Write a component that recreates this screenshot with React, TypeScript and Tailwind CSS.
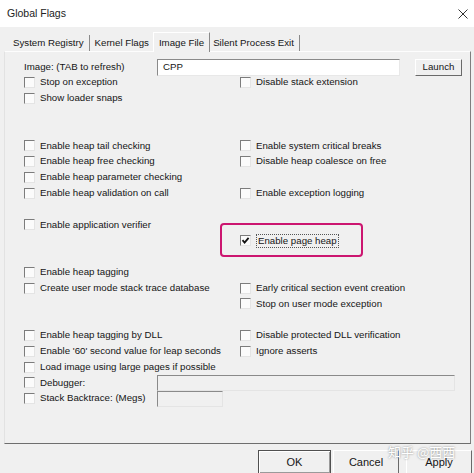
import type { ReactNode } from 'react';

type CheckProps = { label?: string; checked?: boolean; focus?: boolean };

function Box({ checked }: { checked?: boolean }) {
  return (
    <span className="relative h-[11px] w-[11px] shrink-0 border border-t-[#7c7c7c] border-l-[#7c7c7c] border-r-[#e4e4e4] border-b-[#e4e4e4] bg-[#fbfbfb]">
      {checked && (
        <svg viewBox="0 0 9 9" className="absolute inset-0 h-[9px] w-[9px]">
          <path d="M1.5 4.2 L3.6 6.6 L7.6 1.8" fill="none" stroke="#111" strokeWidth="1.8" />
        </svg>
      )}
    </span>
  );
}

function Check({ label, checked, focus }: CheckProps) {
  if (!label) return <div />;
  return (
    <div className="flex items-center gap-[5px]">
      <Box checked={checked} />
      <span className={focus ? 'border border-dotted border-[#555] px-px leading-[12px]' : ''}>{label}</span>
    </div>
  );
}

function Row({ children }: { children: ReactNode }) {
  return <div className="grid h-[15.8px] grid-cols-[216px_1fr] items-center">{children}</div>;
}

function Tab({ label, active }: { label: string; active?: boolean }) {
  return active ? (
    <div className="relative z-10 -mx-[2px] -mb-px flex h-[20px] items-start border-t border-l border-r border-t-white border-l-white border-r-[#8a8a8a] bg-[#f0f0f0] px-[5px] pt-[3px]">
      {label}
    </div>
  ) : (
    <div className="flex h-[16px] items-center border-r border-r-[#8a8a8a] px-[5px] pt-px">{label}</div>
  );
}

function Button({ label, primary, className }: { label: string; primary?: boolean; className: string }) {
  return (
    <div
      className={
        'flex h-[24px] items-center justify-center border bg-[#f0f0f0] text-[11px] ' +
        (primary
          ? 'border-[#505050] shadow-[inset_1px_1px_0_#fff,inset_-1px_-1px_0_#9a9a9a] '
          : 'border-t-white border-l-white border-r-[#6a6a6a] border-b-[#6a6a6a] ') +
        className
      }
    >
      {label}
    </div>
  );
}

export default function App() {
  return (
    <div className="relative h-[473px] w-[474px] overflow-hidden bg-[#f0f0f0] font-['Liberation_Sans',Arial,sans-serif] text-[9.7px] text-[#151515]">
      <div className="flex h-[27px] items-center justify-between bg-white pl-[7px] pr-[6px]">
        <span className="text-[10.5px] text-[#222]">Global Flags</span>
        <svg viewBox="0 0 10 10" className="h-[10px] w-[10px]">
          <path d="M0.5 0.5 L9.5 9.5 M9.5 0.5 L0.5 9.5" stroke="#333" strokeWidth="1" />
        </svg>
      </div>

      <div className="flex h-[24px] items-end pl-[8px]">
        <Tab label="System Registry" />
        <Tab label="Kernel Flags" />
        <Tab label="Image File" active />
        <Tab label="Silent Process Exit" />
      </div>

      <div className="relative ml-[4px] h-[393px] w-[467px] border border-t-[#fdfdfd] border-l-[#e2e2e2] border-r-[#7e7e7e] border-b-[#6e6e6e] pt-[7px] pl-[19px]">
        <Row>
          <span>Image: (TAB to refresh)</span>
          <div className="-ml-[83px] flex items-center">
            <div className="flex h-[17px] w-[243px] items-center border border-t-[#8a8a8a] border-l-[#8a8a8a] border-r-[#e8e8e8] border-b-[#e8e8e8] bg-white pl-[5px]">
              CPP
            </div>
            <div className="ml-[15px] flex h-[17px] w-[47px] items-center justify-center border border-t-white border-l-white border-r-[#6a6a6a] border-b-[#6a6a6a]">
              Launch
            </div>
          </div>
        </Row>
        <Row>
          <Check label="Stop on exception" />
          <Check label="Disable stack extension" />
        </Row>
        <Row>
          <Check label="Show loader snaps" />
          <div />
        </Row>
        <Row>
          <div />
          <div />
        </Row>
        <Row>
          <div />
          <div />
        </Row>
        <Row>
          <Check label="Enable heap tail checking" />
          <Check label="Enable system critical breaks" />
        </Row>
        <Row>
          <Check label="Enable heap free checking" />
          <Check label="Disable heap coalesce on free" />
        </Row>
        <Row>
          <Check label="Enable heap parameter checking" />
          <div />
        </Row>
        <Row>
          <Check label="Enable heap validation on call" />
          <Check label="Enable exception logging" />
        </Row>
        <Row>
          <div />
          <div />
        </Row>
        <Row>
          <Check label="Enable application verifier" />
          <div />
        </Row>
        <Row>
          <div />
          <Check label="Enable page heap" checked focus />
        </Row>
        <Row>
          <div />
          <div />
        </Row>
        <Row>
          <Check label="Enable heap tagging" />
          <div />
        </Row>
        <Row>
          <Check label="Create user mode stack trace database" />
          <Check label="Early critical section event creation" />
        </Row>
        <Row>
          <div />
          <Check label="Stop on user mode exception" />
        </Row>
        <Row>
          <div />
          <div />
        </Row>
        <Row>
          <Check label="Enable heap tagging by DLL" />
          <Check label="Disable protected DLL verification" />
        </Row>
        <Row>
          <Check label="Enable '60' second value for leap seconds" />
          <Check label="Ignore asserts" />
        </Row>
        <Row>
          <Check label="Load image using large pages if possible" />
          <div />
        </Row>
        <Row>
          <Check label="Debugger:" />
          <div className="-ml-[83px] h-[16px] w-[298px] border border-t-[#8a8a8a] border-l-[#8a8a8a] border-r-[#e4e4e4] border-b-[#e4e4e4]" />
        </Row>
        <Row>
          <Check label="Stack Backtrace: (Megs)" />
          <div className="-ml-[83px] h-[16px] w-[66px] border border-t-[#8a8a8a] border-l-[#8a8a8a] border-r-[#e4e4e4] border-b-[#e4e4e4]" />
        </Row>

        <div className="absolute top-[171px] left-[215px] h-[34px] w-[143px] rounded-[4px] border-[2.5px] border-[#cc1670]" />
      </div>

      <div className="mt-[6px] flex pl-[258px]">
        <Button label="OK" primary className="w-[73px]" />
        <Button label="Cancel" className="ml-[2px] w-[66px]" />
        <Button label="Apply" className="ml-[7px] w-[66px]" />
      </div>

      <div className="absolute top-[442px] left-[388px] font-['Noto_Sans_CJK_SC',sans-serif] text-[13px] text-white [text-shadow:0_0_2px_rgba(0,0,0,0.5)]">
        知乎 @西西
      </div>
    </div>
  );
}
